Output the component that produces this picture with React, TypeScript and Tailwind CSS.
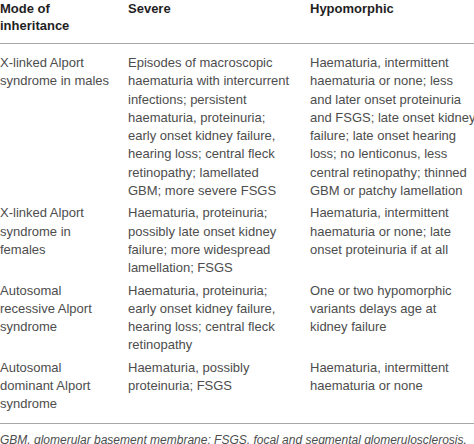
import React from 'react';

type Row = { mode: string[]; severe: string[]; hypo: string[] };

const rows: Row[] = [
  {
    mode: ['X-linked Alport', 'syndrome in males'],
    severe: [
      'Episodes of macroscopic',
      'haematuria with intercurrent',
      'infections; persistent',
      'haematuria, proteinuria;',
      'early onset kidney failure,',
      'hearing loss; central fleck',
      'retinopathy; lamellated',
      'GBM; more severe FSGS',
    ],
    hypo: [
      'Haematuria, intermittent',
      'haematuria or none; less',
      'and later onset proteinuria',
      'and FSGS; late onset kidney',
      'failure; late onset hearing',
      'loss; no lenticonus, less',
      'central retinopathy; thinned',
      'GBM or patchy lamellation',
    ],
  },
  {
    mode: ['X-linked Alport', 'syndrome in', 'females'],
    severe: [
      'Haematuria, proteinuria;',
      'possibly late onset kidney',
      'failure; more widespread',
      'lamellation; FSGS',
    ],
    hypo: [
      'Haematuria, intermittent',
      'haematuria or none; late',
      'onset proteinuria if at all',
    ],
  },
  {
    mode: ['Autosomal', 'recessive Alport', 'syndrome'],
    severe: [
      'Haematuria, proteinuria;',
      'early onset kidney failure,',
      'hearing loss; central fleck',
      'retinopathy',
    ],
    hypo: ['One or two hypomorphic', 'variants delays age at', 'kidney failure'],
  },
  {
    mode: ['Autosomal', 'dominant Alport', 'syndrome'],
    severe: ['Haematuria, possibly', 'proteinuria; FSGS'],
    hypo: ['Haematuria, intermittent', 'haematuria or none'],
  },
];

function Lines({ lines }: { lines: string[] }) {
  return (
    <div>
      {lines.map((l) => (
        <div key={l} className="whitespace-nowrap">
          {l}
        </div>
      ))}
    </div>
  );
}

export default function App() {
  return (
    <div
      className="w-[474px] h-[444px] overflow-hidden bg-white text-[#4d4d4d]"
      style={{ fontFamily: '"Liberation Sans", Arial, sans-serif' }}
    >
      {/* Header */}
      <div className="grid grid-cols-[128px_182px_1fr] pb-[9px] text-[13px] leading-[17px] font-bold text-[#1f1f1f] border-b border-[#a8a8a8]">
        <div>
          <div>Mode of</div>
          <div>inheritance</div>
        </div>
        <div>Severe</div>
        <div>Hypomorphic</div>
      </div>

      {/* Body */}
      <div className="pt-[8px] pb-[7px] border-b border-[#a8a8a8] text-[13px] leading-[18.3px]">
        {rows.map((r, i) => (
          <div key={i} className="grid grid-cols-[128px_182px_1fr] py-[2px]">
            <Lines lines={r.mode} />
            <Lines lines={r.severe} />
            <Lines lines={r.hypo} />
          </div>
        ))}
      </div>

      {/* Footnote */}
      <div className="pt-[8px] text-[12px] leading-[16px] italic whitespace-nowrap text-[#4d4d4d]">
        GBM, glomerular basement membrane; FSGS, focal and segmental glomerulosclerosis.
      </div>
    </div>
  );
}
